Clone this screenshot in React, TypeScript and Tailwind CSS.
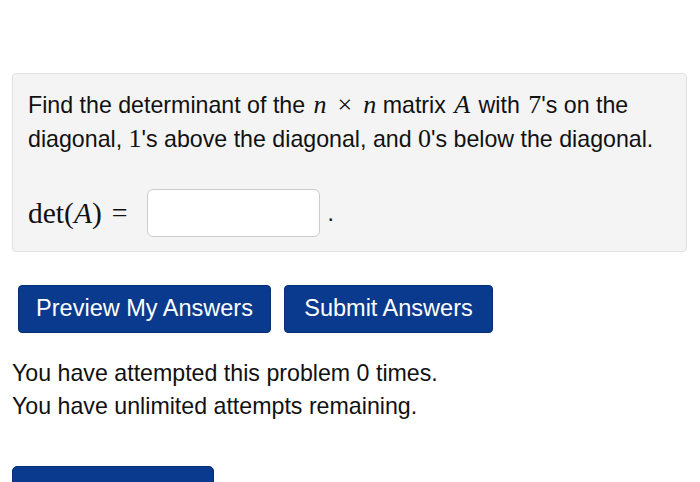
import React from "react";

const serif = { fontFamily: '"Liberation Serif", "DejaVu Serif", serif' };

const M = ({ children, italic = true, className = "" }: { children: React.ReactNode; italic?: boolean; className?: string }) => (
  <span className={`${italic ? "italic" : ""} text-[26px] ${className}`} style={serif}>
    {children}
  </span>
);

const App = () => {
  return (
    <div
      className="w-[700px] h-[482px] overflow-hidden bg-white text-[#111] pt-[73px]"
      style={{ fontFamily: '"Liberation Sans", Arial, sans-serif' }}
    >
      <div className="mx-[12px] w-[675px] h-[179px] bg-[#f4f4f4] border border-[#e2e2e2] rounded-[4px] px-[15px] pt-[14px]">
        <p className="text-[23.2px] leading-[33px]">
          Find the determinant of the <M className="ml-[2px]">n</M>
          <M italic={false} className="mx-[11px]">×</M>
          <M>n</M> matrix <M className="mx-[2px]">A</M> with <M italic={false} className="ml-[2px]">7</M>'s on the diagonal,{" "}
          <M italic={false}>1</M>'s above the diagonal, and <M italic={false}>0</M>'s below the diagonal.
        </p>
        <div className="flex items-center mt-[33px]">
          <span className="text-[29.5px]" style={serif}>
            det(<span className="italic">A</span>)
          </span>
          <span className="ml-[10px] text-[28px]" style={serif}>=</span>
          <div className="ml-[19px] w-[173px] h-[48px] bg-white border border-[#cccccc] rounded-[6px]" />
          <span className="ml-[8px] text-[23px]">.</span>
        </div>
      </div>

      <div className="flex gap-[13px] ml-[18px] mt-[33px]">
        <button className="w-[253px] h-[48px] bg-[#0a3a8e] border border-[#062e75] rounded-[4px] text-white text-[23.5px]">
          Preview My Answers
        </button>
        <button className="w-[209px] h-[48px] bg-[#0a3a8e] border border-[#062e75] rounded-[4px] text-white text-[23.5px]">
          Submit Answers
        </button>
      </div>

      <div className="ml-[12px] mt-[24px] text-[23.2px] leading-[33px]">
        <p>You have attempted this problem 0 times.</p>
        <p>You have unlimited attempts remaining.</p>
      </div>

      <div className="ml-[12px] mt-[43px] w-[202px] h-[40px] bg-[#0a3a8e] border border-[#062e75] rounded-[5px]" />
    </div>
  );
};

export default App;
